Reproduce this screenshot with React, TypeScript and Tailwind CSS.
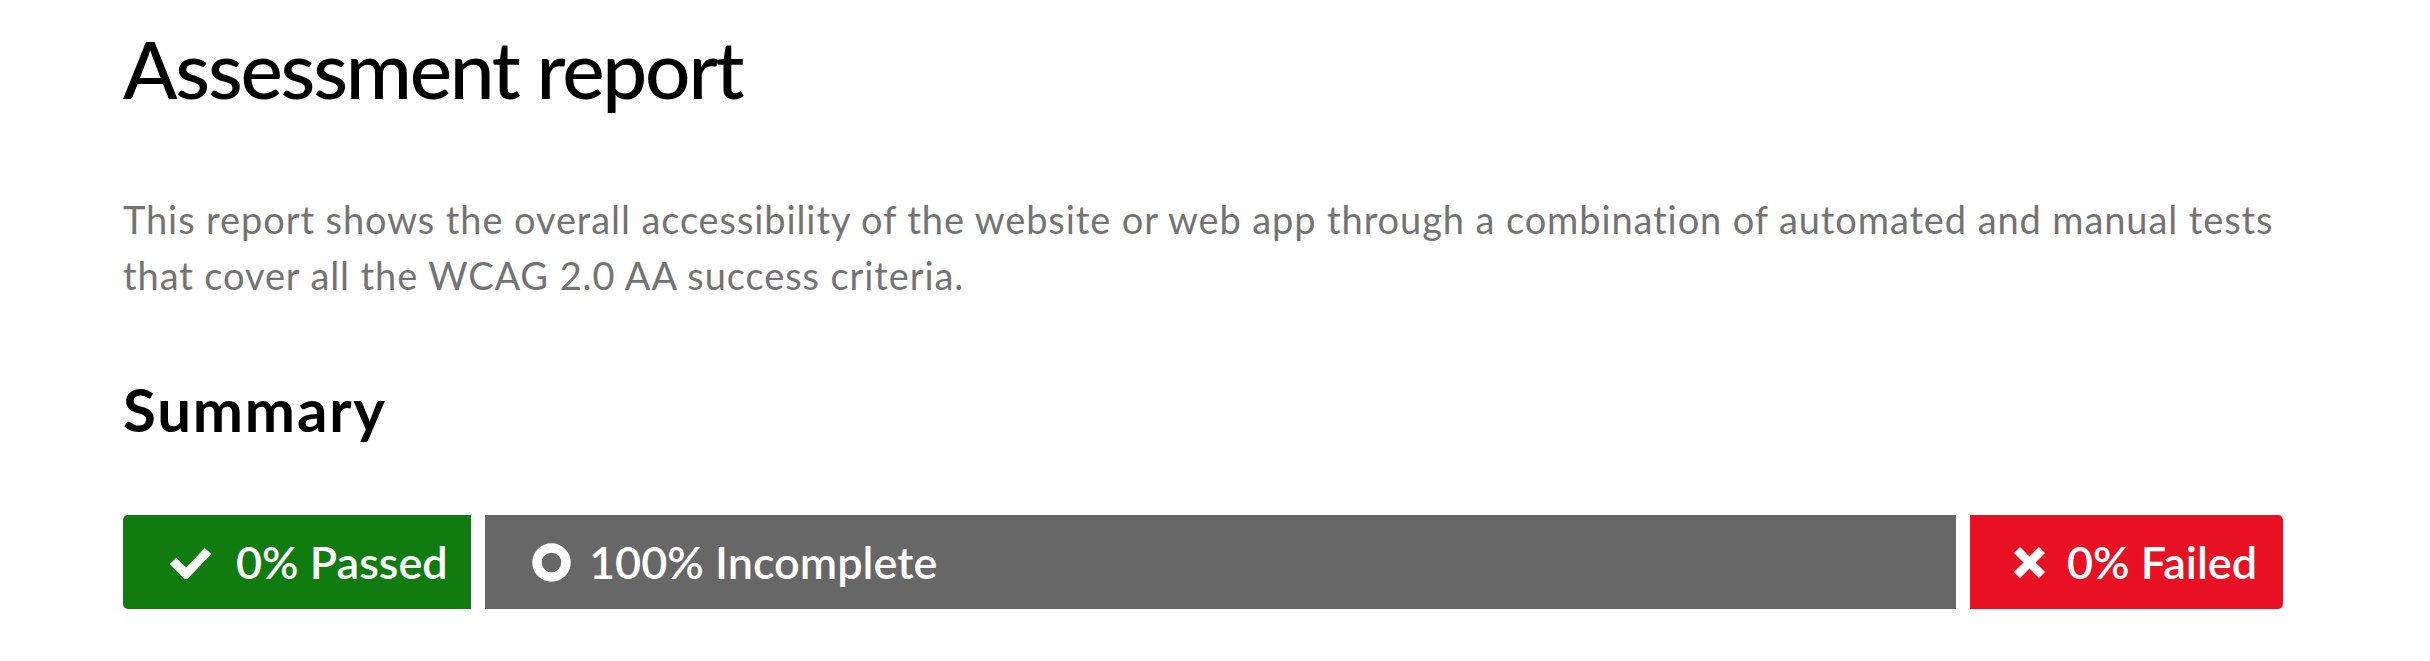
import React from "react";

function CheckIcon() {
  return (
    <svg width="41" height="33" viewBox="0 0 41 33" className="shrink-0">
      <path d="M3 15 L16 28 L38 5" fill="none" stroke="white" strokeWidth="9" strokeLinecap="butt" strokeLinejoin="miter" />
    </svg>
  );
}

function CircleIcon() {
  return (
    <svg width="39" height="39" viewBox="0 0 39 39" className="shrink-0">
      <circle cx="19.5" cy="19.5" r="14.5" fill="none" stroke="white" strokeWidth="9.5" />
    </svg>
  );
}

function CrossIcon() {
  return (
    <svg width="31" height="31" viewBox="0 0 31 31" className="shrink-0">
      <path d="M3 3 L28 28 M28 3 L3 28" fill="none" stroke="white" strokeWidth="8.5" strokeLinecap="butt" />
    </svg>
  );
}

export default function App() {
  return (
    <div className="min-h-[661px] bg-white font-['Lato',sans-serif]">
      <div className="w-[2160px] ml-[123px] pt-[20px]">
        <h1 className="text-[80px] leading-[96px] font-medium tracking-[-2.2px] text-black">Assessment report</h1>
        <p className="mt-[75px] text-[38px] leading-[56px] tracking-[0.9px] text-[#737373]">
          This report shows the overall accessibility of the website or web app through a combination of automated and manual tests that cover all the WCAG 2.0 AA success criteria.
        </p>
        <h2 className="mt-[70px] text-[60px] leading-[72px] font-bold tracking-[1.8px] text-black">Summary</h2>
        <div className="mt-[70px] flex h-[94px] gap-[14px] text-white text-[45px] leading-[54px] font-semibold">
          <div className="flex w-[348px] shrink-0 items-center gap-[25px] rounded-l-[5px] bg-[#107c10] pl-[47px]">
            <CheckIcon />
            <span className="whitespace-nowrap">0% Passed</span>
          </div>
          <div className="flex flex-1 items-center gap-[18px] bg-[#676767] pl-[47px]">
            <CircleIcon />
            <span className="whitespace-nowrap">100% Incomplete</span>
          </div>
          <div className="flex w-[313px] shrink-0 items-center gap-[22px] rounded-r-[5px] bg-[#e81123] pl-[44px]">
            <CrossIcon />
            <span className="whitespace-nowrap">0% Failed</span>
          </div>
        </div>
      </div>
    </div>
  );
}
